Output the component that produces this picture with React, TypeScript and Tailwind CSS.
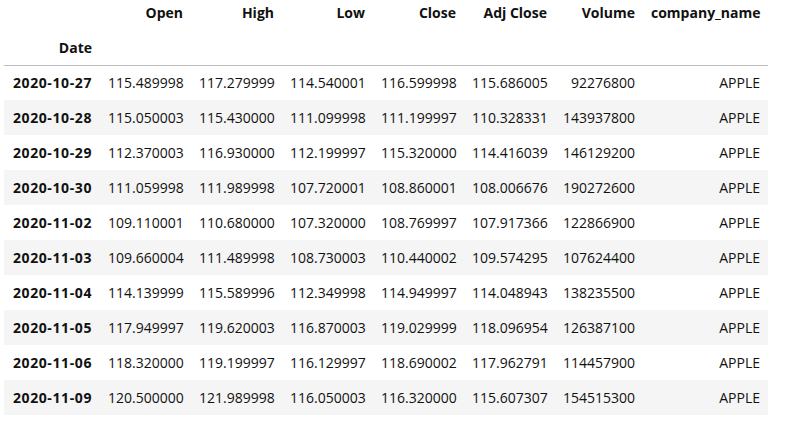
import React from "react";

interface Row {
  date: string;
  open: string;
  high: string;
  low: string;
  close: string;
  adjClose: string;
  volume: string;
  company: string;
}

const rows: Row[] = [
  { date: "2020-10-27", open: "115.489998", high: "117.279999", low: "114.540001", close: "116.599998", adjClose: "115.686005", volume: "92276800", company: "APPLE" },
  { date: "2020-10-28", open: "115.050003", high: "115.430000", low: "111.099998", close: "111.199997", adjClose: "110.328331", volume: "143937800", company: "APPLE" },
  { date: "2020-10-29", open: "112.370003", high: "116.930000", low: "112.199997", close: "115.320000", adjClose: "114.416039", volume: "146129200", company: "APPLE" },
  { date: "2020-10-30", open: "111.059998", high: "111.989998", low: "107.720001", close: "108.860001", adjClose: "108.006676", volume: "190272600", company: "APPLE" },
  { date: "2020-11-02", open: "109.110001", high: "110.680000", low: "107.320000", close: "108.769997", adjClose: "107.917366", volume: "122866900", company: "APPLE" },
  { date: "2020-11-03", open: "109.660004", high: "111.489998", low: "108.730003", close: "110.440002", adjClose: "109.574295", volume: "107624400", company: "APPLE" },
  { date: "2020-11-04", open: "114.139999", high: "115.589996", low: "112.349998", close: "114.949997", adjClose: "114.048943", volume: "138235500", company: "APPLE" },
  { date: "2020-11-05", open: "117.949997", high: "119.620003", low: "116.870003", close: "119.029999", adjClose: "118.096954", volume: "126387100", company: "APPLE" },
  { date: "2020-11-06", open: "118.320000", high: "119.199997", low: "116.129997", close: "118.690002", adjClose: "117.962791", volume: "114457900", company: "APPLE" },
  { date: "2020-11-09", open: "120.500000", high: "121.989998", low: "116.050003", close: "116.320000", adjClose: "115.607307", volume: "154515300", company: "APPLE" },
];

const columns = ["Open", "High", "Low", "Close", "Adj Close", "Volume", "company_name"];

export default function App() {
  return (
    <div className="min-h-[429px] w-[799px] bg-white pl-[4px] overflow-hidden font-['Open_Sans','Noto_Sans',sans-serif] text-[14px] text-[#111]">
      <table className="-mt-[5px] w-[764px] table-fixed border-collapse">
        <colgroup>
          <col className="w-[96px]" />
          <col className="w-[91px]" />
          <col className="w-[91px]" />
          <col className="w-[91px]" />
          <col className="w-[91px]" />
          <col className="w-[91px]" />
          <col className="w-[88px]" />
          <col className="w-[125px]" />
        </colgroup>
        <thead>
          <tr className="h-[35px]">
            <th className="px-2" />
            {columns.map((c) => (
              <th key={c} className="px-2 text-right font-bold whitespace-nowrap">
                {c}
              </th>
            ))}
          </tr>
          <tr className="h-[35px] border-b border-[#bdbdbd]">
            <th className="px-2 text-right font-bold">Date</th>
            {columns.map((c) => (
              <th key={c} className="px-2" />
            ))}
          </tr>
        </thead>
        <tbody>
          {rows.map((r, i) => (
            <tr key={r.date} className={`h-[35px] ${i % 2 === 1 ? "bg-[#f5f5f5]" : "bg-white"}`}>
              <th className="pl-1 pr-2 text-right font-bold tracking-[0.6px] whitespace-nowrap">{r.date}</th>
              <td className="px-2 text-right whitespace-nowrap">{r.open}</td>
              <td className="px-2 text-right whitespace-nowrap">{r.high}</td>
              <td className="px-2 text-right whitespace-nowrap">{r.low}</td>
              <td className="px-2 text-right whitespace-nowrap">{r.close}</td>
              <td className="px-2 text-right whitespace-nowrap">{r.adjClose}</td>
              <td className="px-2 text-right whitespace-nowrap">{r.volume}</td>
              <td className="px-2 text-right whitespace-nowrap">{r.company}</td>
            </tr>
          ))}
        </tbody>
      </table>
    </div>
  );
}
